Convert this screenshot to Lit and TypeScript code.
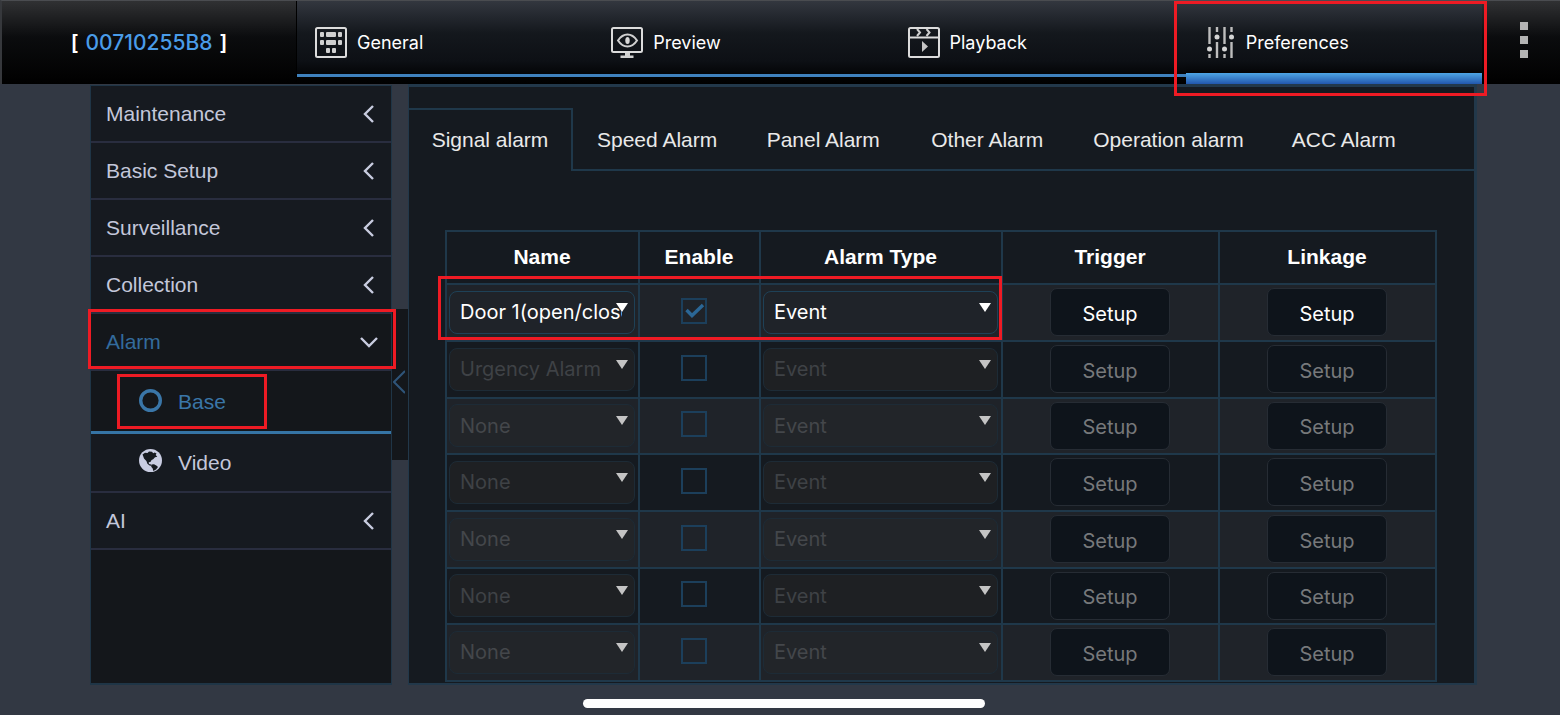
import { LitElement, html, css, svg, nothing } from "lit";
import { customElement, property, state } from "lit/decorators.js";
import { classMap } from "lit/directives/class-map.js";

const icons = {
  general: svg`
    <rect x="1" y="1" width="30" height="29" rx="1.5" fill="none" stroke="#dcdcdc" stroke-width="2"/>
    <g fill="#d0d0d0">
      <rect x="5" y="5" width="4" height="5" rx="1"/><rect x="11" y="5" width="10" height="5" rx="1"/><rect x="23" y="5" width="4" height="5" rx="1"/>
      <rect x="5" y="13" width="4" height="5" rx="1"/><rect x="11" y="13" width="10" height="5" rx="1"/><rect x="23" y="13" width="4" height="5" rx="1"/>
      <rect x="11" y="21" width="4" height="5" rx="1"/><rect x="17" y="21" width="4" height="5" rx="1"/>
    </g>`,
  preview: svg`
    <rect x="1" y="1" width="30" height="24" rx="1.5" fill="none" stroke="#dcdcdc" stroke-width="2"/>
    <path d="M14 26h5v2.500h3.500V31H9.500v-2.500H14z" fill="#d0d0d0"/>
    <path d="M7 13.500Q11 7.500 16.500 7.500T26 13.500Q22 19.500 16.500 19.500T7 13.500z" fill="none" stroke="#d0d0d0" stroke-width="2"/>
    <ellipse cx="16.500" cy="13.500" rx="2.200" ry="3.600" fill="#d8d8d8"/>`,
  playback: svg`
    <rect x="1" y="1" width="30" height="29" rx="1.500" fill="none" stroke="#dcdcdc" stroke-width="2"/>
    <path d="M1 10.500h30" stroke="#dcdcdc" stroke-width="2"/>
    <path d="M9 2l3 3.500L9 9M18.500 2l3 3.500-3 3.500" fill="none" stroke="#cfcfcf" stroke-width="2"/>
    <path d="M14 14v11l6-5.500z" fill="#c4c4c4"/>`,
  preferences: svg`
    <g stroke="#bdbdbd" stroke-width="2.400">
      <path d="M5.500 0v17M5.500 27v4M13 0v5M13 15v16M20.500 0v17M20.500 27v4M27.500 0v5M27.500 15v16"/>
    </g>
    <g fill="#d4d4d4"><circle cx="5.500" cy="22" r="2.500"/><circle cx="13" cy="10" r="2.500"/><circle cx="20.500" cy="22" r="2.500"/><circle cx="27.500" cy="10" r="2.500"/></g>`,
};

type IconName = keyof typeof icons;

@customElement("top-bar")
export class TopBar extends LitElement {
  @property() device = "";

  static styles = css`
    :host {
      display: grid;
      grid-template-columns: 295px 1fr 78px;
      height: 84px;
      box-sizing: border-box;
      border-top: 1px solid #4a4c50;
      border-left: 2px solid #36383c;
      background: linear-gradient(#303133 0, #0b0c0e 36px, #020202 76px, #000 100%);
      font-family: Inter, Roboto, sans-serif;
      color: #fff;
    }
    .device {
      display: flex;
      align-items: center;
      justify-content: center;
      gap: 7px;
      font-size: 21px;
      font-weight: 600;
      border-right: 1px solid #000;
    }
    .id { color: #4a9ce8; font-weight: 500; }
    .nav { display: grid; grid-template-columns: repeat(4, 1fr); }
    .item {
      position: relative;
      display: flex;
      align-items: center;
      gap: 10px;
      box-sizing: border-box;
      height: 76px;
      padding: 9px 0 0 18px;
      color: #fff;
      font-size: 18px;
      text-decoration: none;
      border-bottom: 3px solid #3f81bd;
      background: linear-gradient(#33373f 0, #23272e 16px, #14181d 32px, #0d1015 60px, #040507 100%);
    }
    .active { border-bottom: 0; height: 72px; padding-top: 10px; }
    .active::after {
      content: "";
      position: absolute;
      left: 0;
      right: 0;
      top: 100%;
      height: 11px;
      background: linear-gradient(#4ea6e6, #2257ac);
    }
    .icon { width: 32px; height: 31px; }
    .callout {
      position: absolute;
      z-index: 2;
      inset: 0 -5px -23px -12px;
      border: 3px solid #ee1b24;
      pointer-events: none;
    }
    .menu {
      display: flex;
      flex-direction: column;
      align-items: center;
      gap: 6px;
      padding: 21px 0 0 6px;
      background: none;
      border: 0;
    }
    .dot { width: 8px; height: 8px; background: #b4b4b4; }
  `;

  private items: { icon: IconName; label: string }[] = [
    { icon: "general", label: "General" },
    { icon: "preview", label: "Preview" },
    { icon: "playback", label: "Playback" },
    { icon: "preferences", label: "Preferences" },
  ];

  render() {
    return html`
      <div class="device"><span>[</span><span class="id">${this.device}</span><span>]</span></div>
      <nav class="nav">
        ${this.items.map((item) => {
          const active = item.icon === "preferences";
          return html`<a href="#${item.icon}" class=${classMap({ item: true, active })}>
            <svg class="icon" viewBox="0 0 32 31">${icons[item.icon]}</svg>
            <span>${item.label}</span>
            ${active ? html`<span class="callout"></span>` : nothing}
          </a>`;
        })}
      </nav>
      <button class="menu" aria-label="More">
        <span class="dot"></span><span class="dot"></span><span class="dot"></span>
      </button>
    `;
  }
}

@customElement("side-menu")
export class SideMenu extends LitElement {
  static styles = css`
    :host {
      display: block;
      box-sizing: border-box;
      border: 1px solid #1f3546;
      border-bottom-width: 2px;
      background: #14171b;
      font-family: "Liberation Sans", Arial, sans-serif;
      font-size: 21px;
      color: #c3c7da;
    }
    .item {
      position: relative;
      display: flex;
      align-items: center;
      justify-content: space-between;
      box-sizing: border-box;
      width: 100%;
      height: 57px;
      padding: 0 13px 0 15px;
      border: 0;
      border-bottom: 2px solid #292d3f;
      background: #161a20;
      color: inherit;
      font: inherit;
      text-decoration: none;
    }
    .open { background: #14171b; color: #336b9c; }
    .sub { justify-content: flex-start; gap: 16px; padding: 0 48px; height: 59px; }
    .current {
      height: 63px;
      padding-top: 2px;
      background: #14171b;
      color: #3a76a8;
      border-bottom: 3px solid #3574a5;
    }
    .chevron { width: 18px; height: 18px; fill: none; stroke: #c9cde0; stroke-width: 2.4; }
    .glyph { width: 23px; height: 23px; margin-bottom: 4px; }
    .callout { position: absolute; z-index: 2; border: 3px solid #ee1b24; pointer-events: none; }
    .around { inset: -5px -5px 0 -3px; }
    .inside { inset: 3px 124px 2px 26px; }
  `;

  private chevron(open = false) {
    return html`<svg class="chevron" viewBox="0 0 18 18">
      <path d=${open ? "M1 5l8 8 8-8" : "M13 1L5 9l8 8"} />
    </svg>`;
  }

  render() {
    const closed = (label: string) => html`<button class="item"><span>${label}</span>${this.chevron()}</button>`;
    return html`
      ${["Maintenance", "Basic Setup", "Surveillance", "Collection"].map(closed)}
      <button class="item open" aria-expanded="true">
        <span>Alarm</span>${this.chevron(true)}<span class="callout around"></span>
      </button>
      <a class="item sub current" href="#base">
        <svg class="glyph" viewBox="0 0 23 23"><circle cx="11.500" cy="11.500" r="9.800" fill="none" stroke="#3a76a8" stroke-width="3.400"/></svg>
        <span>Base</span><span class="callout inside"></span>
      </a>
      <a class="item sub" href="#video">
        <svg class="glyph" viewBox="0 0 23 23">
          <circle cx="11.500" cy="11.500" r="11.500" fill="#c9cde2"/>
          <path fill="#161a20" d="M3.500 5.500L6 3.800 8.500 4 10 2.500l3 .2 1.200 1.600 1.500-.8 1.800 1-.8 1.500 1.600 1.700-2.300.6-1.800 2-1.600.6-1.200 2-1.700.3.300 1.700 2 .5.800 1.600-2.200-.5-2.200-1.800-1-2.800L5 9.500 4.300 7.500z"/>
          <path fill="#161a20" d="M12.500 15.500l2.500-.3 2.700 1.500 1.300 1.300-2 2.500-2.700 1.500-.6-2.500-1.500-1.800z"/>
        </svg>
        <span>Video</span>
      </a>
      ${closed("AI")}
    `;
  }
}

interface AlarmRow {
  name: string;
  enabled: boolean;
}

@customElement("alarm-table")
export class AlarmTable extends LitElement {
  @state() private rows: AlarmRow[] = [
    { name: "Door 1(open/close)", enabled: true },
    { name: "Urgency Alarm", enabled: false },
    ...Array.from({ length: 5 }, () => ({ name: "None", enabled: false })),
  ];

  static styles = css`
    :host { display: block; font-family: Inter, Roboto, sans-serif; }
    .table {
      width: 100%;
      table-layout: fixed;
      border-collapse: collapse;
      color: #fff;
    }
    .name { width: 193px; }
    .enable { width: 121px; }
    .type { width: 242px; }
    .action { width: 217px; }
    .head {
      height: 53px;
      box-sizing: border-box;
      padding: 0 1px 1px 0;
      border: 2px solid #1f384a;
      font: bold 21px "Liberation Sans", Arial, sans-serif;
    }
    .row { position: relative; height: 57px; }
    .row:nth-child(3n) { height: 56px; }
    .row:nth-child(odd) { background: #1f2329; }
    .cell { padding: 0 3px 1px 2px; border: 2px solid #1f384a; text-align: center; }
    .field { position: relative; display: block; }
    .select {
      display: block;
      appearance: none;
      box-sizing: border-box;
      width: 100%;
      height: 43px;
      padding: 0 12px 0 10px;
      border: 1px solid #1e4157;
      border-radius: 8px;
      background: transparent;
      color: #fff;
      font: 20px Inter, Roboto, sans-serif;
      text-overflow: clip;
    }
    .select:disabled { border-color: #1d2b36; background: #1e2023; color: #3f4246; opacity: 1; }
    .row:nth-child(odd) .select:disabled { background: #222529; color: #44474b; }
    .arrow {
      position: absolute;
      right: 7px;
      top: 12px;
      width: 12px;
      height: 9px;
      fill: #fff;
      pointer-events: none;
    }
    .off .arrow { fill: #c4c4c4; }
    .tick { position: relative; display: inline-block; vertical-align: middle; width: 26px; height: 26px; margin: 0 10px 3px 0; }
    .box {
      appearance: none;
      display: block;
      box-sizing: border-box;
      width: 26px;
      height: 26px;
      margin: 0;
      border: 2px solid #1c3f5b;
    }
    .mark { position: absolute; inset: 0; fill: none; stroke: #2b6796; stroke-width: 3.4; pointer-events: none; }
    .setup {
      box-sizing: border-box;
      display: block;
      width: 120px;
      height: 48px;
      margin: 0 auto;
      padding: 3px 0 0;
      border: 1px solid #262c34;
      border-radius: 7px;
      background: #0e141b;
      color: #fff;
      font: 20px Inter, Roboto, sans-serif;
    }
    .setup:disabled { color: #77797b; }
    .callout {
      position: absolute;
      z-index: 2;
      box-sizing: border-box;
      top: -8px;
      left: -8px;
      bottom: 1px;
      width: calc(56% + 10px);
      border: 3px solid #ee1b24;
      pointer-events: none;
    }
  `;

  private select(label: string, options: string[], enabled: boolean) {
    return html`<span class="field">
      <select class="select" aria-label=${label} ?disabled=${!enabled}>
        ${options.map((o) => html`<option>${o}</option>`)}
      </select>
      <svg class="arrow" viewBox="0 0 12 9"><path d="M0 0h12L6 9z" /></svg>
    </span>`;
  }

  render() {
    return html`<table class="table">
      <thead>
        <tr>
          <th class="head name">Name</th>
          <th class="head enable">Enable</th>
          <th class="head type">Alarm Type</th>
          <th class="head action">Trigger</th>
          <th class="head action">Linkage</th>
        </tr>
      </thead>
      <tbody>
        ${this.rows.map(
          (row, i) => html`<tr class=${classMap({ row: true, off: !row.enabled })}>
            <td class="cell">
              ${this.select(`Name ${i + 1}`, [row.name], row.enabled)}
              ${row.enabled ? html`<span class="callout"></span>` : nothing}
            </td>
            <td class="cell">
              <span class="tick">
                <input class="box" type="checkbox" aria-label="Enable ${row.name}" .checked=${row.enabled} />
                ${row.enabled
                  ? html`<svg class="mark" viewBox="0 0 26 26"><path d="M5.500 12l5.500 5.500L22 7" /></svg>`
                  : nothing}
              </span>
            </td>
            <td class="cell">${this.select(`Alarm type ${i + 1}`, ["Event"], row.enabled)}</td>
            <td class="cell"><button class="setup" ?disabled=${!row.enabled}>Setup</button></td>
            <td class="cell"><button class="setup" ?disabled=${!row.enabled}>Setup</button></td>
          </tr>`
        )}
      </tbody>
    </table>`;
  }
}

@customElement("app-root")
export class AppRoot extends LitElement {
  static styles = css`
    :host {
      display: flex;
      flex-direction: column;
      height: 100vh;
      overflow: hidden;
      background: #323843;
      font-family: "Liberation Sans", Arial, sans-serif;
    }
    .main {
      flex: 1;
      min-height: 0;
      display: grid;
      grid-template-columns: 302px 16px minmax(0, 1fr);
      padding: 0 83px 0 90px;
    }
    .side { margin-top: 1px; }
    .collapse {
      height: 151px;
      margin-top: 225px;
      padding: 0;
      border: 0;
      background: #14171b;
    }
    .arrow { display: block; width: 12px; height: 24px; margin: 0 2px 6px 1px; fill: none; stroke: #2f5579; stroke-width: 2; }
    .panel {
      box-sizing: border-box;
      border: solid #22384a;
      border-width: 3px 3px 2px 1px;
      background: #151a20;
      overflow: hidden;
    }
    .tabs { display: flex; height: 63px; margin-top: 21px; }
    .tab {
      box-sizing: border-box;
      min-width: 164px;
      padding: 2px 24px 0;
      border: 0 solid #1f384a;
      border-bottom-width: 2px;
      background: none;
      color: #e9e9e9;
      font: 21px "Liberation Sans", Arial, sans-serif;
      white-space: nowrap;
    }
    .selected { padding: 0 22px 2px; border-width: 2px 2px 0 0; }
    .tab:last-of-type { min-width: 0; }
    .rest { flex: 1; border-bottom: 2px solid #1f384a; }
    .body { padding: 59px 37px 0 36px; }
    .bottom { display: flex; justify-content: center; height: 30px; padding-left: 8px; }
    .home { width: 402px; height: 9px; margin-top: 14px; border-radius: 5px; background: #fefefe; }
  `;

  private tabs = ["Signal alarm", "Speed Alarm", "Panel Alarm", "Other Alarm", "Operation alarm", "ACC Alarm"];

  render() {
    return html`
      <top-bar device="00710255B8"></top-bar>
      <main class="main">
        <side-menu class="side"></side-menu>
        <button class="collapse" aria-label="Collapse menu">
          <svg class="arrow" viewBox="0 0 12 24"><path d="M12 1L1 12l11 11" /></svg>
        </button>
        <section class="panel">
          <div class="tabs" role="tablist">
            ${this.tabs.map(
              (t, i) => html`<button role="tab" aria-selected=${i === 0} class=${classMap({ tab: true, selected: i === 0 })}>${t}</button>`
            )}
            <span class="rest"></span>
          </div>
          <div class="body"><alarm-table></alarm-table></div>
        </section>
      </main>
      <div class="bottom"><div class="home"></div></div>
    `;
  }
}
